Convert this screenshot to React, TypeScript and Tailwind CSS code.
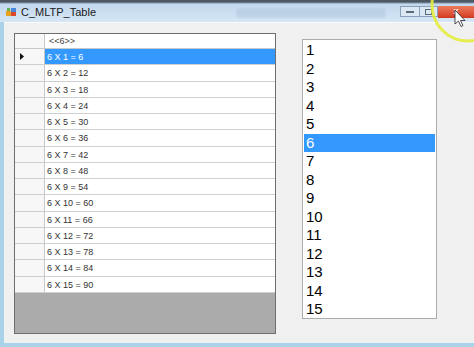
import React from 'react';

const rows = Array.from({ length: 15 }, (_, i) => i + 1);

function AppIcon() {
    return (
        <svg width="11" height="11" viewBox="0 0 11 11">
            <rect x="0" y="4" width="5" height="5" fill="#e8a020" />
            <rect x="5" y="1" width="5" height="4" fill="#4a86d8" />
            <rect x="5" y="5" width="5" height="4" fill="#d84a2a" />
            <rect x="1" y="1" width="3" height="3" fill="#6ab04a" />
        </svg>
    );
}

export default function App() {
    return (
        <div
            className="relative w-[474px] h-[347px] overflow-hidden bg-[#a9d3e8] flex flex-col"
            style={{ fontFamily: '"Liberation Sans", Arial, sans-serif' }}
        >
            {/* Title bar */}
            <div className="h-[22px] shrink-0 flex items-center bg-gradient-to-b from-[#4c5864] via-[#c2d8ee] to-[#d6e6f5] from-[2px] via-[4px] relative">
                <div className="ml-[6px] mt-[2px]">
                    <AppIcon />
                </div>
                <span className="ml-[4px] mt-[2px] text-[11px] text-[#1a1a1a]">C_MLTP_Table</span>
                <div className="ml-[140px] mt-[3px] h-[10px] w-[150px] rounded-sm bg-[#b4c9df] opacity-60 blur-[1px]" />
                {/* Window buttons */}
                <div className="ml-auto flex items-center mt-[1px]">
                    <div className="w-[20px] h-[11px] border border-[#8aa0b8] bg-[#dbe7f3] flex items-center justify-center">
                        <div className="w-[8px] h-[2px] bg-[#5a6a7a]" />
                    </div>
                    <div className="w-[18px] h-[11px] border border-l-0 border-[#8aa0b8] bg-[#dbe7f3] flex items-center justify-center">
                        <div className="w-[7px] h-[6px] border border-[#5a6a7a]" />
                    </div>
                    <div className="w-[36px] h-[12px] bg-gradient-to-b from-[#ec7a5c] to-[#d2381e] flex items-center justify-center text-white text-[9px] font-bold">
                        x
                    </div>
                </div>
            </div>

            {/* Window body */}
            <div className="flex-1 ml-[4px] mb-[4px] bg-[#f0f0f0] border-t border-[#fafafa] flex items-start pl-[10px] pt-[10px]">
                {/* DataGridView */}
                <div className="w-[262px] h-[301px] border border-[#6e6e6e] bg-[#ababab] flex flex-col">
                    <div className="h-[15px] shrink-0 flex bg-white border-b border-[#c8c8c8]">
                        <div className="w-[30px] border-r border-[#c8c8c8] bg-[#f7f7f7]" />
                        <div className="flex-1 pl-[4px] text-[9px] leading-[15px] text-[#444]">&lt;&lt;6&gt;&gt;</div>
                    </div>
                    {rows.map((n) => (
                        <div key={n} className="h-[16.25px] shrink-0 flex border-b border-[#cfcfcf]">
                            <div className="w-[30px] border-r border-[#c8c8c8] bg-[#f7f7f7] flex items-center pl-[5px]">
                                {n === 1 && (
                                    <svg width="4" height="7" viewBox="0 0 4 7">
                                        <path d="M0 0 L4 3.5 L0 7 Z" fill="#111" />
                                    </svg>
                                )}
                            </div>
                            <div
                                className={
                                    n === 1
                                        ? 'flex-1 bg-[#3399ff] text-white text-[9px] leading-[16px] pl-[2px]'
                                        : 'flex-1 bg-white text-[#333] text-[9px] leading-[16px] pl-[2px]'
                                }
                            >
                                6 X {n} = {6 * n}
                            </div>
                        </div>
                    ))}
                </div>

                {/* ListBox */}
                <div className="ml-[26px] mt-[6px] w-[135px] h-[280px] border border-[#acacac] bg-white pt-[1px] px-[1px]">
                    {rows.map((n) => (
                        <div
                            key={n}
                            className={
                                n === 6
                                    ? 'h-[18.5px] leading-[18.5px] text-[15px] pl-[2px] bg-[#3399ff] text-white'
                                    : 'h-[18.5px] leading-[18.5px] text-[15px] pl-[2px] text-black'
                            }
                        >
                            {n}
                        </div>
                    ))}
                </div>
            </div>

            {/* Cursor highlight ring and pointer */}
            <svg className="absolute left-[420px] top-0 pointer-events-none" width="54" height="45" viewBox="420 0 54 45">
                <circle cx="468" cy="5" r="36" fill="none" stroke="#e4ec3c" strokeWidth="3" opacity="0.9" />
                <path d="M455 10 L455 24 L458.5 21 L461 26.5 L463 25.5 L460.5 20.5 L465 20.5 Z" fill="#fff" stroke="#222" strokeWidth="0.8" />
            </svg>
        </div>
    );
}
